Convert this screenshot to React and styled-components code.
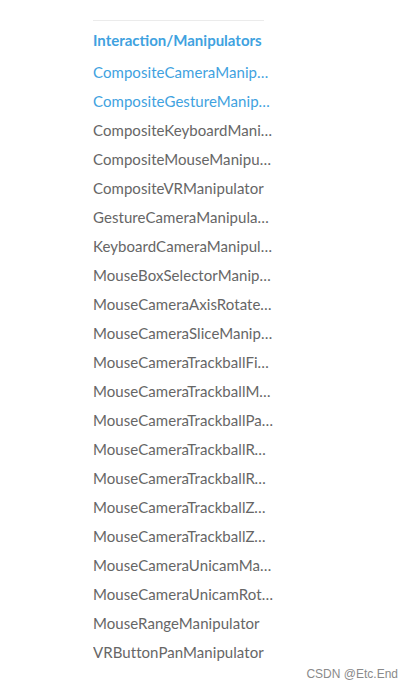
import styled, { createGlobalStyle } from "styled-components";

const Global = createGlobalStyle`
  body {
    margin: 0;
    background: #fff;
    font-family: Lato, "Noto Sans", sans-serif;
  }
`;

const Page = styled.div`
  width: 413px;
  height: 690px;
  position: relative;
  overflow: hidden;
`;

const Nav = styled.nav`
  margin-left: 93px;
  padding-top: 20px;
  width: 180px;
`;

const Rule = styled.div`
  width: 171px;
  border-top: 1px solid #ebebeb;
`;

const Heading = styled.div`
  margin-top: 8px;
  height: 22px;
  line-height: 22px;
  font-size: 15px;
  font-weight: 700;
  color: #3fa2e0;
`;

const List = styled.ul`
  list-style: none;
  margin: 7px 0 0;
  padding: 0;
`;

const Item = styled.li`
  height: 29px;
  line-height: 29px;
  font-size: 15px;
  letter-spacing: 0.06px;
  color: ${(p) => (p.$active ? "#3fa2e0" : "#666666")};
  white-space: nowrap;
  overflow: hidden;
  text-overflow: ellipsis;
`;

const Watermark = styled.div`
  position: absolute;
  right: 15px;
  bottom: 9px;
  font-family: "Liberation Sans", Arial, sans-serif;
  font-size: 12px;
  color: #8a8a8a;
`;

const items = [
  ["CompositeCameraManipulator", true],
  ["CompositeGestureManipulator", true],
  ["CompositeKeyboardManipulator"],
  ["CompositeMouseManipulator"],
  ["CompositeVRManipulator"],
  ["GestureCameraManipulator"],
  ["KeyboardCameraManipulator"],
  ["MouseBoxSelectorManipulator"],
  ["MouseCameraAxisRotateManipulator"],
  ["MouseCameraSliceManipulator"],
  ["MouseCameraTrackballFirstPersonManipulator"],
  ["MouseCameraTrackballMultiRotateManipulator"],
  ["MouseCameraTrackballPanManipulator"],
  ["MouseCameraTrackballRollManipulator"],
  ["MouseCameraTrackballRotateManipulator"],
  ["MouseCameraTrackballZoomManipulator"],
  ["MouseCameraTrackballZoomToMouseManipulator"],
  ["MouseCameraUnicamManipulator"],
  ["MouseCameraUnicamRotateManipulator"],
  ["MouseRangeManipulator"],
  ["VRButtonPanManipulator"],
];

export default function App() {
  return (
    <Page>
      <Global />
      <Nav>
        <Rule />
        <Heading>Interaction/Manipulators</Heading>
        <List>
          {items.map(([name, active]) => (
            <Item key={name} $active={active}>
              {name}
            </Item>
          ))}
        </List>
      </Nav>
      <Watermark>CSDN @Etc.End</Watermark>
    </Page>
  );
}
